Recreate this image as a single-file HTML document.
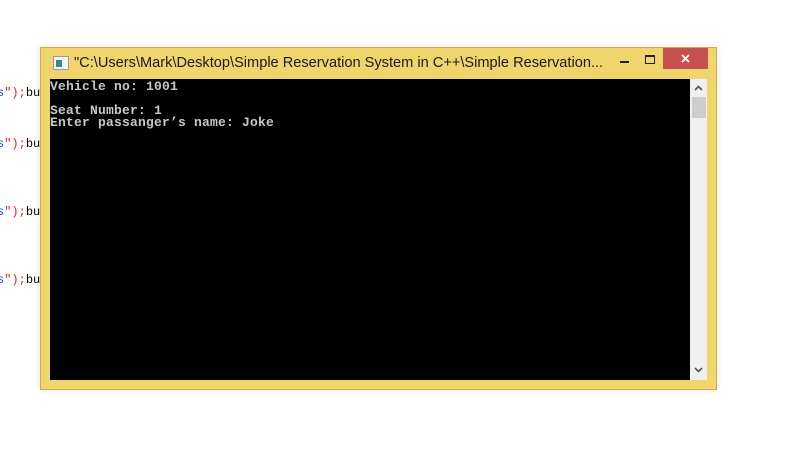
<!DOCTYPE html>
<html><head><style>
body{margin:0;width:798px;height:450px;background:#fff;position:relative;overflow:hidden;font-family:"Liberation Sans",sans-serif}
.code{position:absolute;left:-3px;font-family:"Liberation Mono",monospace;font-size:12px;line-height:14px;white-space:pre}
.b{color:#1c3fd6}.r{color:#e02020}.k{color:#000}
.win{position:absolute;left:40px;top:47px;width:675px;height:341px;background:#efd56c;border:1px solid #c8ae5a;box-shadow:0 0 6px rgba(0,0,0,.12)}
.title{position:absolute;left:33px;top:7px;font-size:14.6px;color:#1a1a1a;white-space:nowrap}
.icon{position:absolute;left:12px;top:8px;width:14px;height:12px;background:#f4f4f4;border:1px solid #999}
.icon i{position:absolute;left:2px;top:3px;width:6px;height:7px;background:#3a8a8a}
.con{position:absolute;left:9px;top:31px;width:640px;height:301px;background:#000}
.txt{position:absolute;left:9px;top:33px;font-family:"Liberation Mono",monospace;font-weight:bold;font-size:13px;line-height:12px;color:#c8c8c8;white-space:pre;letter-spacing:0.2px}
.sb{position:absolute;left:649px;top:31px;width:17px;height:301px;background:#f0f0f0}
.thumb{position:absolute;left:2px;top:18px;width:14px;height:21px;background:#cdcdcd}
.close{position:absolute;left:622px;top:0;width:45px;height:21px;background:#c75050}
</style></head><body>
<div class="code" style="top:86px"><span class="b">s</span><span class="r">");</span><span class="k">bu</span></div>
<div class="code" style="top:137px"><span class="b">s</span><span class="r">");</span><span class="k">bu</span></div>
<div class="code" style="top:205px"><span class="b">s</span><span class="r">");</span><span class="k">bu</span></div>
<div class="code" style="top:273px"><span class="b">s</span><span class="r">");</span><span class="k">bu</span></div>
<div class="win">
<div class="icon"><i></i></div>
<div class="title">"C:\Users\Mark\Desktop\Simple Reservation System in C++\Simple Reservation...</div>
<div style="position:absolute;left:579px;top:13px;width:9px;height:2px;background:#222"></div>
<div style="position:absolute;left:604px;top:7px;width:8px;height:6px;border:1px solid #222;border-top-width:2px"></div>
<div class="close"><svg style="position:absolute;left:18px;top:6px" width="9" height="9"><path d="M1 1L8 8M8 1L1 8" stroke="#fff" stroke-width="1.8"/></svg></div>
<div class="con"></div>
<div class="txt">Vehicle no: 1001

Seat Number: 1
Enter passanger’s name: Joke</div>
<div class="sb"><div class="thumb"></div>
<svg style="position:absolute;left:4px;top:6px" width="9" height="6"><path d="M1 5L4.5 1.5L8 5" stroke="#555" stroke-width="1.6" fill="none"/></svg>
<svg style="position:absolute;left:4px;top:288px" width="9" height="6"><path d="M1 1L4.5 4.5L8 1" stroke="#555" stroke-width="1.6" fill="none"/></svg>
</div>
</div>
</body></html>
